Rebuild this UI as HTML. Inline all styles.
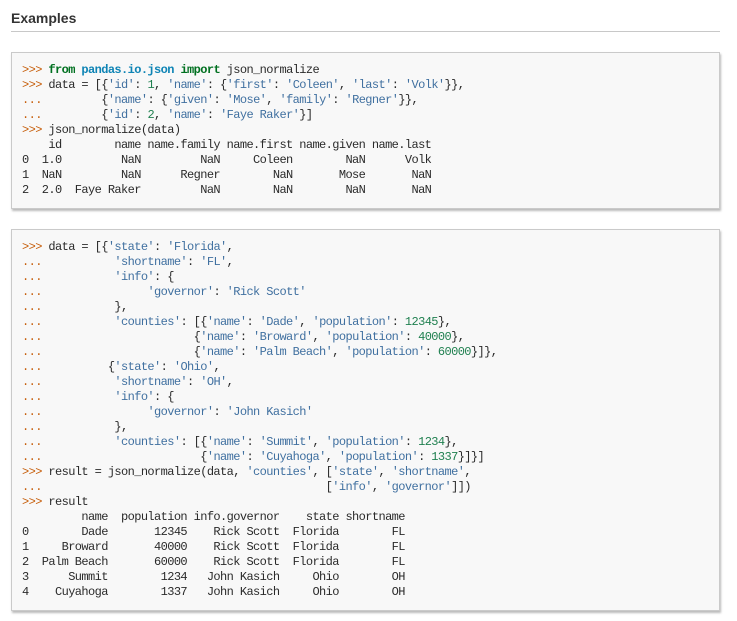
<!DOCTYPE html>
<html><head><meta charset="utf-8"><style>
body{margin:0;background:#fff;width:737px;height:621px;overflow:hidden;font-family:"Liberation Sans",sans-serif;}
h2{position:absolute;left:11px;top:10px;margin:0;font-size:14px;font-weight:bold;color:#333;width:709px;height:21px;border-bottom:1px solid #c8c8c8;}
pre{position:absolute;left:11px;width:687px;margin:0;padding:10px 10px 10px 10px;background:#f8f8f8;border:1px solid #cacaca;box-shadow:1px 2px 2px #bbb;font-family:"Liberation Mono",monospace;font-size:12px;letter-spacing:-0.6px;line-height:15px;color:#2a2a2a;white-space:pre;}
.p{color:#c65d09}.k{color:#007020;font-weight:bold}.n{color:#0e84b5;font-weight:bold}.s{color:#4070a0}.m{color:#208050}
</style></head><body>
<h2>Examples</h2>
<pre style="top:52px;height:135px"><span class="p">&gt;&gt;&gt; </span><span class="k">from</span> <span class="n">pandas.io.json</span> <span class="k">import</span> json_normalize
<span class="p">&gt;&gt;&gt; </span>data = [{<span class="s">'id'</span>: <span class="m">1</span>, <span class="s">'name'</span>: {<span class="s">'first'</span>: <span class="s">'Coleen'</span>, <span class="s">'last'</span>: <span class="s">'Volk'</span>}},
<span class="p">... </span>        {<span class="s">'name'</span>: {<span class="s">'given'</span>: <span class="s">'Mose'</span>, <span class="s">'family'</span>: <span class="s">'Regner'</span>}},
<span class="p">... </span>        {<span class="s">'id'</span>: <span class="m">2</span>, <span class="s">'name'</span>: <span class="s">'Faye Raker'</span>}]
<span class="p">&gt;&gt;&gt; </span>json_normalize(data)
    id        name name.family name.first name.given name.last
0  1.0         NaN         NaN     Coleen        NaN      Volk
1  NaN         NaN      Regner        NaN       Mose       NaN
2  2.0  Faye Raker         NaN        NaN        NaN       NaN</pre>
<pre style="top:229px;height:360px"><span class="p">&gt;&gt;&gt; </span>data = [{<span class="s">'state'</span>: <span class="s">'Florida'</span>,
<span class="p">... </span>          <span class="s">'shortname'</span>: <span class="s">'FL'</span>,
<span class="p">... </span>          <span class="s">'info'</span>: {
<span class="p">... </span>               <span class="s">'governor'</span>: <span class="s">'Rick Scott'</span>
<span class="p">... </span>          },
<span class="p">... </span>          <span class="s">'counties'</span>: [{<span class="s">'name'</span>: <span class="s">'Dade'</span>, <span class="s">'population'</span>: <span class="m">12345</span>},
<span class="p">... </span>                      {<span class="s">'name'</span>: <span class="s">'Broward'</span>, <span class="s">'population'</span>: <span class="m">40000</span>},
<span class="p">... </span>                      {<span class="s">'name'</span>: <span class="s">'Palm Beach'</span>, <span class="s">'population'</span>: <span class="m">60000</span>}]},
<span class="p">... </span>         {<span class="s">'state'</span>: <span class="s">'Ohio'</span>,
<span class="p">... </span>          <span class="s">'shortname'</span>: <span class="s">'OH'</span>,
<span class="p">... </span>          <span class="s">'info'</span>: {
<span class="p">... </span>               <span class="s">'governor'</span>: <span class="s">'John Kasich'</span>
<span class="p">... </span>          },
<span class="p">... </span>          <span class="s">'counties'</span>: [{<span class="s">'name'</span>: <span class="s">'Summit'</span>, <span class="s">'population'</span>: <span class="m">1234</span>},
<span class="p">... </span>                       {<span class="s">'name'</span>: <span class="s">'Cuyahoga'</span>, <span class="s">'population'</span>: <span class="m">1337</span>}]}]
<span class="p">&gt;&gt;&gt; </span>result = json_normalize(data, <span class="s">'counties'</span>, [<span class="s">'state'</span>, <span class="s">'shortname'</span>,
<span class="p">... </span>                                          [<span class="s">'info'</span>, <span class="s">'governor'</span>]])
<span class="p">&gt;&gt;&gt; </span>result
         name  population info.governor    state shortname
0        Dade       12345    Rick Scott  Florida        FL
1     Broward       40000    Rick Scott  Florida        FL
2  Palm Beach       60000    Rick Scott  Florida        FL
3      Summit        1234   John Kasich     Ohio        OH
4    Cuyahoga        1337   John Kasich     Ohio        OH</pre>
</body></html>
